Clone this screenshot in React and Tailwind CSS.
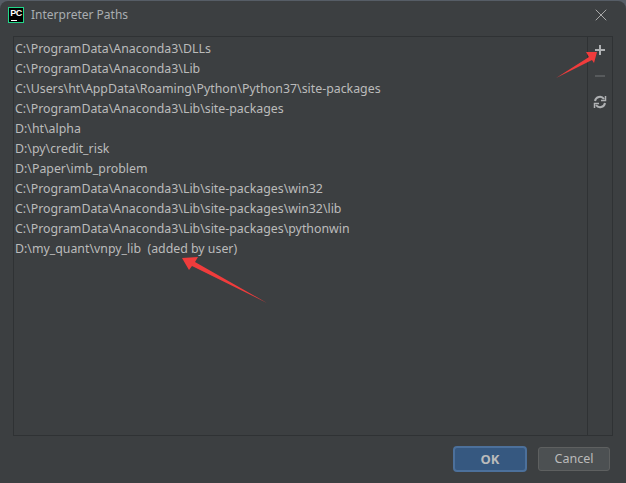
import React from 'react';
import { X } from 'lucide-react';

const paths = [
  'C:\\ProgramData\\Anaconda3\\DLLs',
  'C:\\ProgramData\\Anaconda3\\Lib',
  'C:\\Users\\ht\\AppData\\Roaming\\Python\\Python37\\site-packages',
  'C:\\ProgramData\\Anaconda3\\Lib\\site-packages',
  'D:\\ht\\alpha',
  'D:\\py\\credit_risk',
  'D:\\Paper\\imb_problem',
  'C:\\ProgramData\\Anaconda3\\Lib\\site-packages\\win32',
  'C:\\ProgramData\\Anaconda3\\Lib\\site-packages\\win32\\lib',
  'C:\\ProgramData\\Anaconda3\\Lib\\site-packages\\pythonwin',
];

function PcLogo() {
  return (
    <div className="w-4 h-4 bg-black border border-[#21d789] flex flex-col items-center relative shrink-0">
      <span className="text-[9px] leading-[9px] font-bold text-white tracking-[-0.5px] mt-[1px] font-['Liberation_Sans',sans-serif]">PC</span>
      <div className="absolute left-[2px] bottom-[1px] w-[6px] h-[1px] bg-white" />
    </div>
  );
}

function Arrow({ className, viewBox, d }) {
  return (
    <svg className={className} viewBox={viewBox}>
      <path d={d} fill="#f03c3c" />
    </svg>
  );
}

export default function App() {
  return (
    <div className="w-[626px] h-[483px] bg-[#565d66] relative overflow-hidden">
      <div className="mt-[1px] h-[482px] bg-[#3c3f41] rounded-t-[8px] flex flex-col font-['Noto_Sans',sans-serif] text-[12.35px] text-[#bbbbbb]">
        <div className="h-[35px] flex items-center pl-[8px] pr-[15px] shrink-0 pb-[8px]">
          <PcLogo />
          <span className="ml-[7px] text-[12px] text-[#a9aeb1]">Interpreter Paths</span>
          <X className="ml-auto w-[20px] h-[20px] text-[#a9a9a9]" strokeWidth={1.2} />
        </div>

        <div className="mx-[13px] h-[400px] border border-[#2f3234] flex shrink-0">
          <div className="flex-1 pt-[2px] pl-[1px]">
            {paths.map((p) => (
              <div key={p} className="h-[20px] leading-[20px] whitespace-nowrap">{p}</div>
            ))}
            <div className="h-[20px] leading-[20px] whitespace-pre">D:\my_quant\vnpy_lib  (added by user)</div>
          </div>
          <div className="w-[25px] border-l border-[#2f3234] flex flex-col items-center pt-[5px] gap-[10px]">
            <svg className="w-4 h-4" viewBox="0 0 16 16">
              <path d="M7 3h2v4h4v2H9v4H7V9H3V7h4z" fill="#afb1b3" />
            </svg>
            <svg className="w-4 h-4" viewBox="0 0 16 16">
              <path d="M3 7h10v2H3z" fill="#575a5c" />
            </svg>
            <svg className="w-4 h-4" viewBox="0 0 16 16" fill="none" stroke="#afb1b3" strokeWidth="2">
              <path d="M3 7A5 5 0 0 1 12 5" />
              <path d="M13 9A5 5 0 0 1 4 11" />
              <path d="M13.500 2v4.500H9M2.500 14V9.500H7" strokeWidth="1.500" />
            </svg>
          </div>
        </div>

        <div className="flex justify-end items-center gap-[11px] mt-[10px] pr-[16px]">
          <button className="w-[74px] h-[26px] rounded-[4px] bg-[#365880] border-2 border-[#4c709b] font-bold text-[#bbbbbb] text-[13px] leading-none">OK</button>
          <button className="w-[72px] h-[24px] rounded-[3px] bg-[#4c5052] border border-[#5e6060] text-[#bbbbbb] text-[12.5px] leading-none">Cancel</button>
        </div>
      </div>

      <Arrow
        className="absolute left-0 top-0 w-[626px] h-[483px] pointer-events-none"
        viewBox="0 0 626 483"
        d="M182 258L198 257L195 262L267 303L192 266L189 270Z M597 52L586 52L589 57L556 78L592 60L594 63Z"
      />
    </div>
  );
}
